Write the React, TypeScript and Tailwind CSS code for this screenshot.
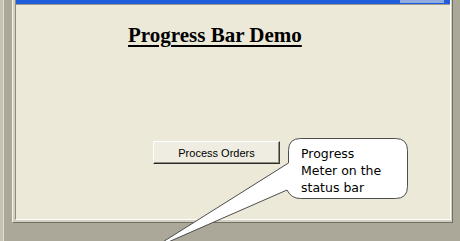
import React from "react";

export default function App() {
  return (
    <div className="relative w-[460px] h-[241px] overflow-hidden bg-[#aca899] flex items-start">
      {/* left strip */}
      <div className="flex h-full w-[12px] shrink-0">
        <div className="w-[3px] h-full bg-[#c6c3b4]" />
        <div className="w-[1px] h-full bg-[#dedcd2]" />
        <div className="flex-1 h-full bg-[#aca899]" />
      </div>

      {/* window */}
      <div className="w-[441px] h-[223px] shrink-0 flex flex-col bg-[#d4d0c1] border-l border-l-[#f4f3ee] border-r border-r-[#716f64] border-b border-b-[#716f64] pl-[2px] pr-[1px] pb-[2px]">
        <div className="flex-1 flex flex-col bg-[#ece9d8] border-l border-l-[#8d8a7b] border-r border-r-white border-b border-b-white">
          {/* title bar bottom edge */}
          <div className="h-[4px] shrink-0 bg-[#1f5ddb] flex justify-end pr-[6px]">
            <div className="w-[44px] h-[3px] bg-[#8fabdf]" />
          </div>
          <div className="h-[1px] shrink-0 bg-[#9c9a8a]" />

          <div className="flex-1 flex flex-col">
            <div className="mt-[19px] pl-[112px]">
              <span className="text-[21px] leading-[21px] font-bold underline decoration-2 underline-offset-[3px] text-black font-['Liberation_Serif',serif]">
                Progress Bar Demo
              </span>
            </div>

            <div className="mt-[93px] pl-[137px]">
              <button className="w-[127px] h-[23px] bg-[#efede1] border border-t-white border-l-white border-b-[#2a2a2a] border-r-[#3a3a3a] shadow-[inset_-1px_-1px_0_#8f8c7d] text-[11px] leading-[20px] text-black font-['Liberation_Sans',Arial,sans-serif] flex items-center justify-center">
                Process Orders
              </button>
            </div>
          </div>
        </div>
      </div>

      {/* callout */}
      <svg
        className="absolute left-0 top-0 pointer-events-none"
        width="460"
        height="241"
        viewBox="0 0 460 241"
      >
        <path
          d="M300.5 138.5 H395.5 Q407.5 138.5 407.5 150.5 V186.5 Q407.5 198.5 395.5 198.5 H300.5 Q291 198.5 287 190 L150 250 L288.5 163 V150.5 Q288.5 138.5 300.5 138.5 Z"
          fill="#ffffff"
          stroke="#4d4d4d"
          strokeWidth="1"
        />
      </svg>
      <div className="absolute left-[301px] top-[145px] text-[12.5px] leading-[17px] text-black font-['DejaVu_Sans',Verdana,sans-serif]">
        <div>Progress</div>
        <div>Meter on the</div>
        <div>status bar</div>
      </div>
    </div>
  );
}
